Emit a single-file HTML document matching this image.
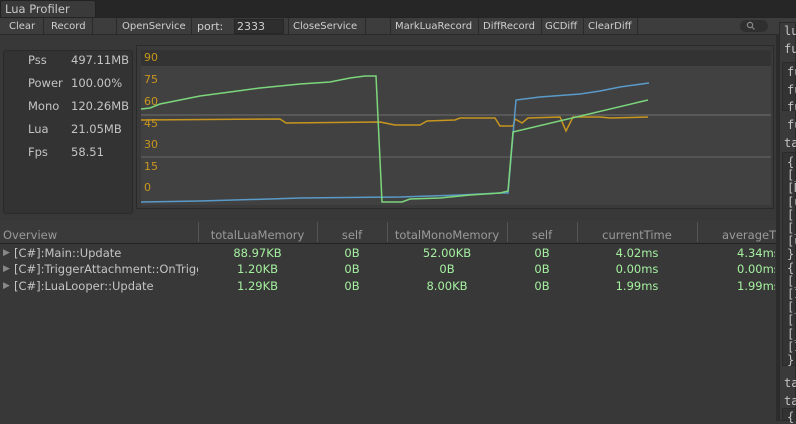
<!DOCTYPE html>
<html><head><meta charset="utf-8"><style>
*{margin:0;padding:0;box-sizing:border-box}
body{width:796px;height:421px;background:#383838;font-family:"DejaVu Sans","Liberation Sans",sans-serif;font-size:11px;color:#c4c4c4;position:relative;overflow:hidden}
.a{position:absolute;white-space:nowrap}
.tb{font-size:10px;color:#cfcfcf}
.sep{position:absolute;top:18px;width:1px;height:16px;background:#2a2a2a}
.g{color:#a5f0a0;font-size:11.5px}
.c{text-align:center}
.y{color:#c8961e;font-size:11px}
.hs{position:absolute;top:222px;width:1px;height:20px;background:#555}
.st{font-size:11.5px}
.m{font-family:'DejaVu Sans Mono',monospace;font-size:12px;position:absolute;white-space:nowrap}
.r{font-size:11.5px}
</style></head><body>
<div class="a" style="left:0;top:0;width:796px;height:17px;background:#262626"></div>
<div class="a" style="left:0;top:0;width:96px;height:18px;background:#3a3a3a;border-radius:3px 3px 0 0;border:1px solid #222;border-bottom:none"></div>
<div class="a" style="left:5px;top:2px;font-size:11.5px;color:#c8c8c8">Lua Profiler</div>
<div class="a" style="left:0;top:17px;width:796px;height:18px;background:#3d3d3d;border-top:1px solid #242424;border-bottom:1px solid #2a2a2a"></div>
<div class="a tb" style="left:9px;top:21px">Clear</div>
<div class="sep" style="left:43px"></div>
<div class="a tb" style="left:51px;top:21px">Record</div>
<div class="sep" style="left:92px"></div>
<div class="sep" style="left:116px"></div>
<div class="a tb" style="left:122px;top:21px">OpenService</div>
<div class="sep" style="left:191px"></div>
<div class="a tb" style="left:197px;top:20px;font-size:11px">port:</div>
<div class="a" style="left:234px;top:19px;width:50px;height:15px;background:#2e2e2e;border:1px solid #262626"></div>
<div class="a tb" style="left:237px;top:20px;font-size:11px">2333</div>
<div class="sep" style="left:288px"></div>
<div class="a tb" style="left:293px;top:21px">CloseService</div>
<div class="sep" style="left:365px"></div>
<div class="sep" style="left:390px"></div>
<div class="a tb" style="left:395px;top:21px">MarkLuaRecord</div>
<div class="sep" style="left:478px"></div>
<div class="a tb" style="left:483px;top:21px">DiffRecord</div>
<div class="sep" style="left:541px"></div>
<div class="a tb" style="left:545px;top:21px">GCDiff</div>
<div class="sep" style="left:583px"></div>
<div class="a tb" style="left:588px;top:21px">ClearDiff</div>
<div class="sep" style="left:637px"></div>
<div class="a" style="left:740px;top:20px;width:28px;height:12px;background:#2f2f2f;border-radius:7px"></div>
<svg class="a" style="left:746px;top:21px" width="10" height="10" fill="none" stroke="#888" stroke-width="1.2"><circle cx="4" cy="4" r="2.6"/><line x1="6" y1="6" x2="8.5" y2="8.5"/></svg>

<div class="a" style="left:3px;top:50px;width:130px;height:164px;background:#333;border:1px solid #2a2a2a;border-radius:3px"></div>
<div class="a st" style="left:28px;top:53px">Pss</div><div class="a st" style="left:71px;top:53px">497.11MB</div>
<div class="a st" style="left:28px;top:76px">Power</div><div class="a st" style="left:71px;top:76px">100.00%</div>
<div class="a st" style="left:28px;top:99px">Mono</div><div class="a st" style="left:71px;top:99px">120.26MB</div>
<div class="a st" style="left:28px;top:122px">Lua</div><div class="a st" style="left:71px;top:122px">21.05MB</div>
<div class="a st" style="left:28px;top:145px">Fps</div><div class="a st" style="left:71px;top:145px">58.51</div>

<div class="a" style="left:136px;top:45px;width:638px;height:164px;background:#3a3a3a;border:1px solid #2a2a2a"></div>
<div class="a" style="left:141px;top:50px;width:630px;height:16px;background:#333"></div>
<div class="a" style="left:141px;top:66px;width:630px;height:139px;background:#414141"></div>
<div class="a" style="left:141px;top:114px;width:630px;height:2px;background:#585858"></div>
<div class="a" style="left:141px;top:156px;width:630px;height:2px;background:#535353"></div>
<div class="a y" style="left:144px;top:51px">90</div>
<div class="a y" style="left:144px;top:73px">75</div>
<div class="a y" style="left:144px;top:95px">60</div>
<div class="a y" style="left:144px;top:117px">45</div>
<div class="a y" style="left:144px;top:138px">30</div>
<div class="a y" style="left:144px;top:160px">15</div>
<div class="a y" style="left:144px;top:181px">0</div>
<svg class="a" style="left:0;top:0" width="796" height="421" fill="none" stroke-width="1.5">
<polyline stroke="#c8961e" points="141,120 280,119 286,123 380,122 395,125 420,125 427,121 455,120 460,118 495,118 500,126 513,126 515,119 522,123 528,118 560,117 566,131 573,117 600,117 610,118 648,117"/>
<polyline stroke="#5a9ac8" points="141,202 200,201 270,199 300,198 400,197 460,195 500,193 508,193 516,100 540,97 580,94 600,91 620,87 649,83"/>
<polyline stroke="#7cd67c" points="141,109 150,108 160,104 180,100 200,96 230,92 260,88 300,84 330,82 350,78 365,76 376,76 382,202 402,202 410,199 440,198 470,195 500,193 508,191 513,132 648,100"/>
</svg>

<div class="a" style="left:0;top:220px;width:776px;height:24px;background:#3a3a3a;border-bottom:1px solid #222"></div>
<div class="a" style="left:3px;top:228px;color:#9a9a9a;font-size:11.5px">Overview</div>
<div class="hs" style="left:198px"></div>
<div class="a c" style="left:198px;width:119px;top:228px;color:#9a9a9a;font-size:11.5px">totalLuaMemory</div>
<div class="hs" style="left:317px"></div>
<div class="a c" style="left:317px;width:70px;top:228px;color:#9a9a9a;font-size:11.5px">self</div>
<div class="hs" style="left:387px"></div>
<div class="a c" style="left:387px;width:120px;top:228px;color:#9a9a9a;font-size:11.5px">totalMonoMemory</div>
<div class="hs" style="left:507px"></div>
<div class="a c" style="left:507px;width:70px;top:228px;color:#9a9a9a;font-size:11.5px">self</div>
<div class="hs" style="left:577px"></div>
<div class="a c" style="left:577px;width:120px;top:228px;color:#9a9a9a;font-size:11.5px">currentTime</div>
<div class="hs" style="left:697px"></div>
<div class="a" style="left:722px;top:228px;color:#9a9a9a;font-size:11.5px">averageT</div>

<div class="a" style="left:3px;top:248px;color:#888;font-size:9px">&#9654;</div>
<div class="a" style="left:3px;top:264px;color:#888;font-size:9px">&#9654;</div>
<div class="a" style="left:3px;top:281px;color:#888;font-size:9px">&#9654;</div>
<div class="a r" style="left:14px;width:184px;overflow:hidden;top:246px">[C#]:Main::Update</div>
<div class="a r" style="left:14px;width:184px;overflow:hidden;top:262px">[C#]:TriggerAttachment::OnTrigger</div>
<div class="a r" style="left:14px;width:184px;overflow:hidden;top:279px">[C#]:LuaLooper::Update</div>

<div class="a c g" style="left:198px;width:119px;top:246px">88.97KB</div>
<div class="a c g" style="left:198px;width:119px;top:262px">1.20KB</div>
<div class="a c g" style="left:198px;width:119px;top:279px">1.29KB</div>
<div class="a c g" style="left:317px;width:70px;top:246px">0B</div>
<div class="a c g" style="left:317px;width:70px;top:262px">0B</div>
<div class="a c g" style="left:317px;width:70px;top:279px">0B</div>
<div class="a c g" style="left:387px;width:120px;top:246px">52.00KB</div>
<div class="a c g" style="left:387px;width:120px;top:262px">0B</div>
<div class="a c g" style="left:387px;width:120px;top:279px">8.00KB</div>
<div class="a c g" style="left:507px;width:70px;top:246px">0B</div>
<div class="a c g" style="left:507px;width:70px;top:262px">0B</div>
<div class="a c g" style="left:507px;width:70px;top:279px">0B</div>
<div class="a c g" style="left:577px;width:120px;top:246px">4.02ms</div>
<div class="a c g" style="left:577px;width:120px;top:262px">0.00ms</div>
<div class="a c g" style="left:577px;width:120px;top:279px">1.99ms</div>
<div class="a g" style="left:737px;width:38px;overflow:hidden;top:246px">4.34ms</div>
<div class="a g" style="left:737px;width:38px;overflow:hidden;top:262px">0.00ms</div>
<div class="a g" style="left:737px;width:38px;overflow:hidden;top:279px">1.99ms</div>

<div class="a" style="left:776px;top:35px;width:20px;height:386px;background:#2c2c2c"></div>
<div class="a" style="left:779px;top:22px;width:17px;height:399px;background:#3a3a3a;border:1px solid #2a2a2a"></div>
<div class="a" style="left:782px;top:62px;width:14px;height:49px;background:#333;border:1px solid #2a2a2a"></div>
<div class="a" style="left:782px;top:152px;width:14px;height:214px;background:#333;border:1px solid #2a2a2a"></div>
<div class="a" style="left:782px;top:408px;width:14px;height:13px;background:#333;border:1px solid #2a2a2a"></div>
<div class="m" style="left:784px;top:24px">lua</div>
<div class="m" style="left:784px;top:42px">fu</div>
<div class="m" style="left:787px;top:65px">fu</div>
<div class="m" style="left:787px;top:83px">fu</div>
<div class="m" style="left:787px;top:100px">fu</div>
<div class="m" style="left:787px;top:118px">fu</div>
<div class="m" style="left:784px;top:136px">ta</div>
<div class="m" style="left:787px;top:156px;line-height:13.2px">{<br>[_<br>[M<br>[u<br>[.<br>[_<br>[u<br>}<br>{<br>[_<br>[I<br>[_<br>[.<br>[_<br>[I<br>}</div>
<div class="m" style="left:784px;top:376px">ta</div>
<div class="m" style="left:784px;top:394px">ta</div>
<div class="m" style="left:787px;top:410px">{</div>
</body></html>
